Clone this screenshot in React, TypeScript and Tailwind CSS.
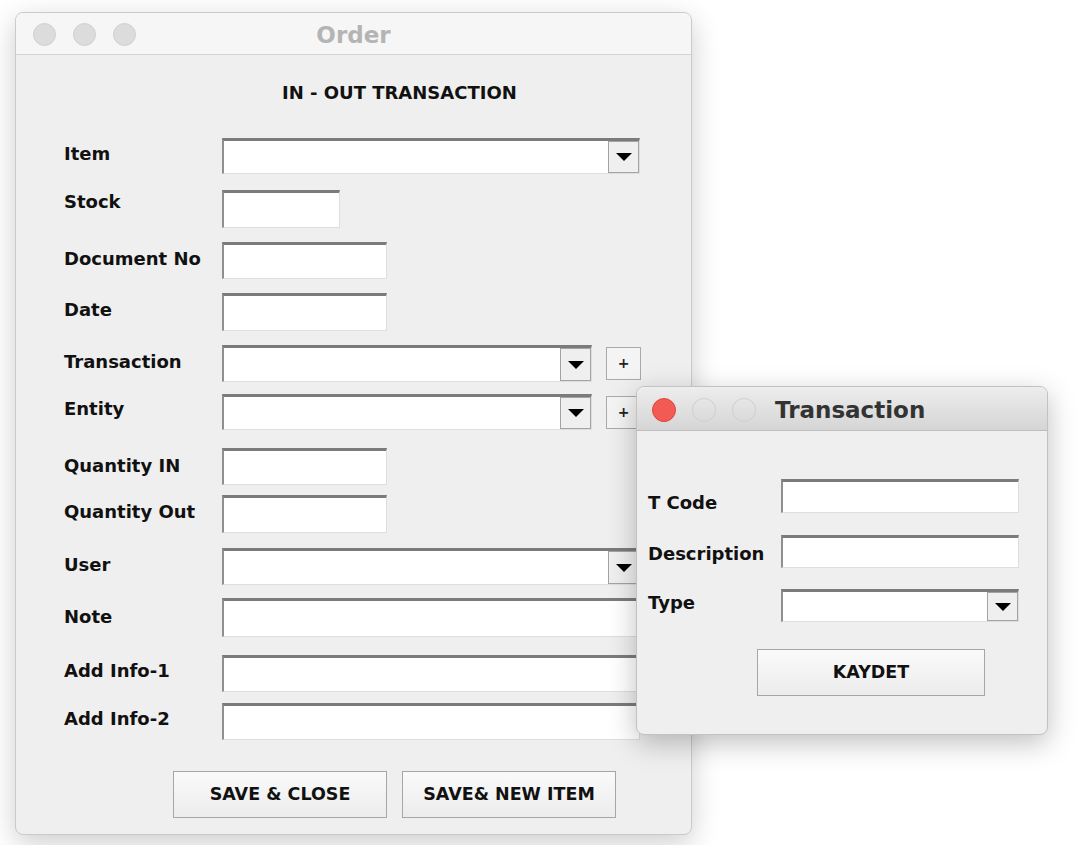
import React from 'react';

type Row = {
  label: string;
  mt: string;
  box: string;
  labelPad: string;
  combo?: boolean;
  plus?: boolean;
};

const orderRows: Row[] = [
  { label: 'Item', mt: 'mt-[34px]', box: 'w-[418px] h-[36px]', labelPad: 'pb-[4px]', combo: true },
  { label: 'Stock', mt: 'mt-[16px]', box: 'w-[118px] h-[38px]', labelPad: 'pb-[14px]' },
  { label: 'Document No', mt: 'mt-[14px]', box: 'w-[165px] h-[37px]', labelPad: 'pb-[4px]' },
  { label: 'Date', mt: 'mt-[14px]', box: 'w-[165px] h-[38px]', labelPad: 'pb-[4px]' },
  { label: 'Transaction', mt: 'mt-[14px]', box: 'w-[370px] h-[37px]', labelPad: 'pb-[4px]', combo: true, plus: true },
  { label: 'Entity', mt: 'mt-[12px]', box: 'w-[370px] h-[36px]', labelPad: 'pb-[6px]', combo: true, plus: true },
  { label: 'Quantity IN', mt: 'mt-[18px]', box: 'w-[165px] h-[37px]', labelPad: 'pb-[1px]' },
  { label: 'Quantity Out', mt: 'mt-[10px]', box: 'w-[165px] h-[38px]', labelPad: 'pb-[4px]' },
  { label: 'User', mt: 'mt-[15px]', box: 'w-[418px] h-[37px]', labelPad: 'pb-[4px]', combo: true },
  { label: 'Note', mt: 'mt-[13px]', box: 'w-[418px] h-[39px]', labelPad: 'pb-[2px]' },
  { label: 'Add Info-1', mt: 'mt-[18px]', box: 'w-[418px] h-[37px]', labelPad: 'pb-[6px]' },
  { label: 'Add Info-2', mt: 'mt-[11px]', box: 'w-[418px] h-[37px]', labelPad: 'pb-[6px]' },
];

function Box({ className, combo }: { className: string; combo?: boolean }) {
  return (
    <div
      className={`flex bg-white border-t-[3px] border-t-[#7b7b7b] border-l-2 border-l-[#8f8f8f] border-r border-r-[#dedede] border-b border-b-[#dedede] ${className}`}
    >
      <div className="flex-1" />
      {combo && (
        <div className="w-[31px] h-full bg-[#efefef] border border-[#a3a3a3] flex items-center justify-center">
          <svg width="18" height="10" viewBox="0 0 18 10">
            <path d="M1 1 L17 1 L9 9 Z" fill="#000" />
          </svg>
        </div>
      )}
    </div>
  );
}

function Btn({ children, className }: { children: React.ReactNode; className: string }) {
  return (
    <div
      className={`flex items-center justify-center bg-gradient-to-b from-[#fafafa] to-[#ececec] border border-[#a6a6a6] text-[17.5px] font-bold text-[#111] ${className}`}
    >
      {children}
    </div>
  );
}

function OrderWindow() {
  return (
    <div className="absolute left-[15px] top-[12px] w-[677px] h-[823px] rounded-[8px] border border-[#cacaca] bg-[#efefef] shadow-[0_8px_28px_rgba(0,0,0,0.2)] overflow-hidden flex flex-col">
      {/* title bar (inactive) */}
      <div className="relative h-[42px] flex items-center bg-[#f6f6f6] border-b border-[#d3d3d3]">
        <div className="flex items-center gap-[17px] pl-[17px] pt-[2px]">
          <div className="w-[23px] h-[23px] rounded-full bg-[#dcdcdc] border border-[#d0d0d0]" />
          <div className="w-[23px] h-[23px] rounded-full bg-[#dcdcdc] border border-[#d0d0d0]" />
          <div className="w-[23px] h-[23px] rounded-full bg-[#dcdcdc] border border-[#d0d0d0]" />
        </div>
        <span className="absolute inset-0 pt-[4px] flex items-center justify-center text-[23px] font-bold text-[#b4b4b4]">
          Order
        </span>
      </div>

      <div className="flex flex-col pl-[48px]">
        <div className="mt-[27px] pl-[218px] text-[18px] leading-[22px] font-bold text-[#111]">
          IN - OUT TRANSACTION
        </div>

        {orderRows.map((r) => (
          <div key={r.label} className={`flex items-center ${r.mt}`}>
            <div className={`w-[158px] text-[18px] leading-[22px] font-bold text-[#111] ${r.labelPad}`}>
              {r.label}
            </div>
            <Box className={r.box} combo={r.combo} />
            {r.plus && (
              <div className="ml-[14px] w-[35px] h-[33px] flex items-center justify-center bg-[#f4f4f4] border border-[#a9a9a9] text-[14px] font-bold text-[#222]">
                +
              </div>
            )}
          </div>
        ))}

        <div className="flex gap-[15px] mt-[31px] pl-[109px]">
          <Btn className="w-[214px] h-[47px]">SAVE &amp; CLOSE</Btn>
          <Btn className="w-[214px] h-[47px]">SAVE&amp; NEW ITEM</Btn>
        </div>
      </div>
    </div>
  );
}

function TransactionWindow() {
  return (
    <div className="absolute left-[636px] top-[386px] w-[412px] h-[349px] rounded-[8px] border border-[#c2c2c2] bg-[#efefef] shadow-[0_8px_28px_rgba(0,0,0,0.25)] overflow-hidden flex flex-col">
      {/* title bar (active) */}
      <div className="h-[44px] flex items-center bg-gradient-to-b from-[#ededed] to-[#d5d5d5] border-b border-[#bcbcbc]">
        <div className="flex items-center gap-[16px] pl-[15px] pt-[2px]">
          <div className="w-[24px] h-[24px] rounded-full bg-[#f25b53] border border-[#dc463e]" />
          <div className="w-[24px] h-[24px] rounded-full border border-[#cfcfcf]" />
          <div className="w-[24px] h-[24px] rounded-full border border-[#cfcfcf]" />
        </div>
        <span className="ml-[19px] pt-[4px] text-[23px] font-bold text-[#333]">Transaction</span>
      </div>

      <div className="flex flex-col pl-[11px]">
        <div className="flex items-center mt-[47px]">
          <div className="w-[133px] pt-[14px] text-[18px] leading-[22px] font-bold text-[#111]">T Code</div>
          <Box className="w-[238px] h-[34px]" />
        </div>
        <div className="flex items-center mt-[21px]">
          <div className="w-[133px] pt-[4px] text-[18px] leading-[22px] font-bold text-[#111]">Description</div>
          <Box className="w-[238px] h-[33px]" />
        </div>
        <div className="flex items-center mt-[21px]">
          <div className="w-[133px] pb-[6px] text-[18px] leading-[22px] font-bold text-[#111]">Type</div>
          <Box className="w-[238px] h-[33px]" combo />
        </div>
        <div className="flex mt-[27px] pl-[109px]">
          <Btn className="w-[228px] h-[47px]">KAYDET</Btn>
        </div>
      </div>
    </div>
  );
}

export default function App() {
  return (
    <div className="relative w-[1080px] h-[845px] bg-white overflow-hidden font-['DejaVu_Sans',Verdana,sans-serif]">
      <OrderWindow />
      <TransactionWindow />
    </div>
  );
}
